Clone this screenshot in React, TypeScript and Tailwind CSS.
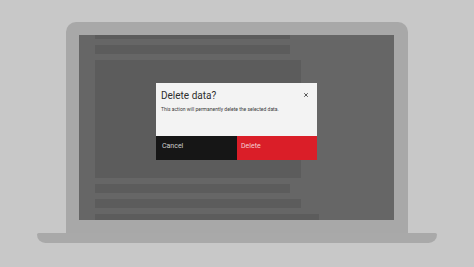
import { X } from "lucide-react";

const Bar = ({ w, h }: { w: string; h: string }) => (
  <div className={`${w} ${h} shrink-0 bg-[#5c5c5c]`} />
);

const App = () => {
  return (
    <div className="relative w-[474px] h-[267px] overflow-hidden bg-[#c8c8c8] flex flex-col items-center pt-[22px] font-['Roboto',sans-serif]">
      {/* laptop body */}
      <div className="w-[342px] h-[211px] rounded-t-[10px] bg-[#a8a8a8] px-[13px] pt-[13px]">
        <div className="h-[185px] w-[315px] overflow-hidden bg-[#666666] pl-[16px] flex flex-col gap-[6px]">
          <Bar w="w-[195px]" h="h-[4px]" />
          <Bar w="w-[195px]" h="h-[9px]" />
          <Bar w="w-[206px]" h="h-[118px]" />
          <Bar w="w-[195px]" h="h-[9px]" />
          <Bar w="w-[206px]" h="h-[9px]" />
          <Bar w="w-[224px]" h="h-[9px]" />
        </div>
      </div>
      {/* laptop base */}
      <div className="w-[400px] h-[10px] rounded-b-[10px] rounded-t-[2px] bg-[#a9a9a9]" />

      {/* modal */}
      <div className="absolute left-[156px] top-[83px] w-[161px] h-[77px] flex flex-col">
        <div className="relative h-[53px] bg-[#f3f3f3] px-[5px] pt-[6px]">
          <div className="text-[10px] leading-[14px] text-[#2e2e2e]">Delete data?</div>
          <div className="mt-[3px] text-[5px] leading-[6px] text-[#3a3a3a]">
            This action will permanently delete the selected data.
          </div>
          <X className="absolute right-[8px] top-[9px] w-[6px] h-[6px] text-[#222]" strokeWidth={3} />
        </div>
        <div className="flex h-[24px]">
          <div className="w-[81px] bg-[#161616] pl-[6px] pt-[6px] text-[7px] leading-[9px] text-[#cfcfcf]">
            Cancel
          </div>
          <div className="flex-1 bg-[#da1e28] pl-[4px] pt-[6px] text-[7px] leading-[9px] text-[#f6d0d2]">
            Delete
          </div>
        </div>
      </div>
    </div>
  );
};

export default App;
